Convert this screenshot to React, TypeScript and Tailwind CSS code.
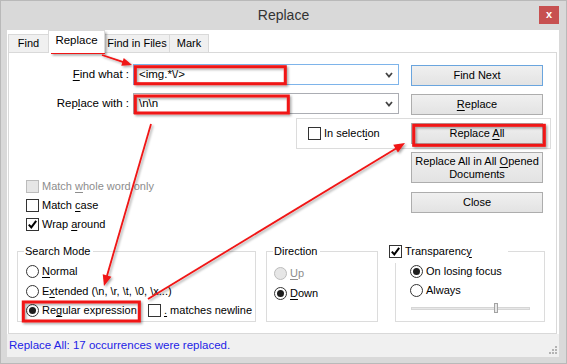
import React from "react";

function U({ children }: { children: React.ReactNode }) {
  return <span className="underline underline-offset-[2px] decoration-[1px]">{children}</span>;
}

function Check({ checked = false, disabled = false }: { checked?: boolean; disabled?: boolean }) {
  return (
    <span
      className={
        disabled
          ? "w-[13px] h-[13px] shrink-0 border border-[#bcbcbc] bg-[#e6e6e6]"
          : "w-[13px] h-[13px] shrink-0 border border-[#333333] bg-white flex items-center justify-center"
      }
    >
      {checked && (
        <svg width="11" height="11" viewBox="0 0 11 11">
          <path d="M1.8 5.6 L4.3 8.4 L9.2 1.8" stroke="#000" strokeWidth="2" fill="none" />
        </svg>
      )}
    </span>
  );
}

function Radio({ checked = false, disabled = false }: { checked?: boolean; disabled?: boolean }) {
  return (
    <span
      className={
        disabled
          ? "w-[13px] h-[13px] shrink-0 rounded-full border border-[#bcbcbc] bg-[#e6e6e6]"
          : "w-[13px] h-[13px] shrink-0 rounded-full border border-[#333333] bg-white flex items-center justify-center"
      }
    >
      {checked && <span className="w-[7px] h-[7px] rounded-full bg-[#1e1e1e]" />}
    </span>
  );
}

function Btn({
  children,
  def = false,
  tall = false,
}: {
  children: React.ReactNode;
  def?: boolean;
  tall?: boolean;
}) {
  return (
    <div
      className={
        (tall ? "h-[31px] leading-[13px] " : "h-[21px] ") +
        (def ? "border-[#6aa5de] " : "border-[#adadad] ") +
        "w-[132px] shrink-0 flex flex-col items-center justify-center text-center border bg-linear-to-b from-[#f0f0f0] to-[#e3e3e3]"
      }
    >
      {children}
    </div>
  );
}

function Combo({ value, focus = false }: { value: string; focus?: boolean }) {
  return (
    <div
      className={
        (focus ? "border-[#7eb4ea] " : "border-[#abadb3] ") +
        "w-[266px] h-[21px] border bg-white flex items-center pl-[5px]"
      }
    >
      <span className="whitespace-pre">{value}</span>
      <svg className="ml-auto mr-[5px]" width="8" height="6" viewBox="0 0 8 6">
        <path d="M1 1 L4 4.5 L7 1" stroke="#444" strokeWidth="1.8" fill="none" />
      </svg>
    </div>
  );
}

function arrowHead(x1: number, y1: number, x2: number, y2: number, len = 11, half = 4.5) {
  const dx = x2 - x1;
  const dy = y2 - y1;
  const n = Math.hypot(dx, dy);
  const ux = dx / n;
  const uy = dy / n;
  const bx = x2 - ux * len;
  const by = y2 - uy * len;
  const px = -uy;
  const py = ux;
  return {
    line: { x1, y1, x2: bx + ux * 1, y2: by + uy * 1 },
    pts: `${x2},${y2} ${bx + px * half},${by + py * half} ${bx - px * half},${by - py * half}`,
  };
}

const RED = "#f01414";

function Overlay() {
  const arrows = [
    arrowHead(101, 54, 131, 64, 10, 4),
    arrowHead(150, 123, 103, 285),
    arrowHead(147, 298, 404, 142),
  ];
  const rects = [
    { x: 51.5, y: 31.5, w: 51, h: 20 },
    { x: 134.3, y: 65.7, w: 150, h: 17 },
    { x: 134.3, y: 95, w: 153, h: 17 },
    { x: 412.7, y: 124.3, w: 130.6, h: 20 },
    { x: 22.3, y: 301, w: 116, h: 19 },
  ];
  return (
    <svg className="absolute left-0 top-0 pointer-events-none" width="567" height="364" viewBox="0 0 567 364">
      <defs>
        <filter id="sh" x="-20%" y="-20%" width="140%" height="140%">
          <feDropShadow dx="1.5" dy="1.5" stdDeviation="1.2" floodColor="#000" floodOpacity="0.35" />
        </filter>
      </defs>
      <g filter="url(#sh)">
        {rects.map((r, i) => (
          <rect key={i} x={r.x} y={r.y} width={r.w} height={r.h} fill="none" stroke={RED} strokeWidth="3" />
        ))}
        {arrows.map((a, i) => (
          <g key={i}>
            <line x1={a.line.x1} y1={a.line.y1} x2={a.line.x2} y2={a.line.y2} stroke={RED} strokeWidth="1.8" />
            <polygon points={a.pts} fill={RED} />
          </g>
        ))}
      </g>
    </svg>
  );
}

function GroupHeader({ label }: { label: string }) {
  return (
    <div className="flex h-[14px] items-center">
      <div className="self-end w-[7px] h-[7px] border-l border-t border-[#dcdcdc]" />
      <span className="pl-[1px] pr-[3px]">{label}</span>
      <div className="self-end flex-1 h-[7px] border-r border-t border-[#dcdcdc]" />
    </div>
  );
}

export default function App() {
  return (
    <div className="relative w-[567px] h-[364px] bg-[#d9d9d9] border border-[#b9b9b9] flex flex-col overflow-hidden font-['Liberation_Sans',Arial,sans-serif] text-[11px] text-black">
      {/* Title bar */}
      <div className="h-[29px] shrink-0 flex">
        <div className="w-[28px]" />
        <div className="flex-1 flex items-center justify-center text-[14px] text-[#333333] pb-[1px]">Replace</div>
        <div className="w-[28px] pt-[5px]">
          <div className="ml-[1px] w-[20px] h-[18px] bg-[#c75050] flex items-center justify-center text-white font-bold text-[11px] leading-none pb-[2px]">
            x
          </div>
        </div>
      </div>

      {/* Client */}
      <div className="ml-[6px] w-[552px] h-[327px] bg-white flex flex-col">
        {/* Tabs */}
        <div className="h-[22px] shrink-0 flex items-end pl-[1px]">
          <div className="w-[41px] h-[18px] border border-b-0 border-[#d9d9d9] bg-[#f0f0f0] flex items-center justify-center">
            Find
          </div>
          <div className="relative z-10 -ml-px -mb-px w-[57px] h-[23px] border border-b-0 border-[#d9d9d9] bg-white flex items-center justify-center pb-[2px] text-[11.5px]">
            Replace
          </div>
          <div className="-ml-px w-[66px] h-[18px] border border-b-0 border-[#d9d9d9] bg-[#f0f0f0] flex items-center justify-center">
            Find in Files
          </div>
          <div className="-ml-px w-[40px] h-[18px] border border-b-0 border-[#d9d9d9] bg-[#f0f0f0] flex items-center justify-center">
            Mark
          </div>
        </div>

        {/* Panel */}
        <div className="ml-[1px] w-[549px] h-[282px] shrink-0 border border-[#d9d9d9] bg-white flex flex-col">
          <div className="flex">
            {/* Left block */}
            <div className="w-[390px] flex flex-col">
              <div className="mt-[11px] h-[21px] flex items-center text-[11.5px]">
                <span className="w-[120px] text-right">
                  <U>F</U>ind what :
                </span>
                <div className="ml-[4px]">
                  <Combo value="<img.*\/>" focus />
                </div>
              </div>
              <div className="mt-[8px] h-[21px] flex items-center text-[11.5px]">
                <span className="w-[120px] text-right">
                  Rep<U>l</U>ace with :
                </span>
                <div className="ml-[4px]">
                  <Combo value="\n\n" />
                </div>
              </div>
              <div className="mt-[63px] pl-[17px] flex flex-col">
                <div className="h-[19px] flex items-center gap-[3px] text-[#8d8d8d]">
                  <Check disabled />
                  <span>
                    Match <U>w</U>hole word only
                  </span>
                </div>
                <div className="h-[19px] flex items-center gap-[3px]">
                  <Check />
                  <span>
                    Match <U>c</U>ase
                  </span>
                </div>
                <div className="h-[19px] flex items-center gap-[3px]">
                  <Check checked />
                  <span>
                    Wrap <U>a</U>round
                  </span>
                </div>
              </div>
            </div>

            {/* Right block */}
            <div className="ml-[12px] w-[132px] flex flex-col pt-[12px]">
              <Btn def>Find Next</Btn>
              <div className="mt-[8px]">
                <Btn>
                  <span>
                    <U>R</U>eplace
                  </span>
                </Btn>
              </div>
              <div className="mt-[3px] -ml-[115px] w-[255px] h-[31px] border border-[#dcdcdc] flex items-center">
                <div className="pl-[11px] flex items-center gap-[3px]">
                  <Check />
                  <span>
                    In select<U>i</U>on
                  </span>
                </div>
                <div className="ml-auto mr-[7px]">
                  <Btn>
                    <span>
                      Replace <U>A</U>ll
                    </span>
                  </Btn>
                </div>
              </div>
              <div className="mt-[3px]">
                <Btn tall>
                  <span className="whitespace-nowrap">
                    Replace All in All <U>O</U>pened
                  </span>
                  <span>Documents</span>
                </Btn>
              </div>
              <div className="mt-[9px]">
                <Btn>Close</Btn>
              </div>
            </div>
          </div>

          {/* Group boxes */}
          <div className="mt-[10px] ml-[8px] flex items-start">
            <div className="w-[239px] flex flex-col">
              <GroupHeader label="Search Mode" />
              <div className="h-[64px] border-x border-b border-[#dcdcdc] pl-[8px] pt-[3px] flex flex-col">
                <div className="h-[20px] flex items-center gap-[3px]">
                  <Radio />
                  <span>
                    <U>N</U>ormal
                  </span>
                </div>
                <div className="h-[20px] flex items-center gap-[3px]">
                  <Radio />
                  <span className="whitespace-pre">
                    E<U>x</U>tended (\n, \r, \t, \0, \x...)
                  </span>
                </div>
                <div className="h-[19px] flex items-center">
                  <Radio checked />
                  <span className="ml-[3px] w-[106px] whitespace-nowrap">
                    Re<U>g</U>ular expression
                  </span>
                  <Check />
                  <span className="ml-[3px] whitespace-nowrap">
                    <U>.</U> matches newline
                  </span>
                </div>
              </div>
            </div>

            <div className="ml-[10px] w-[112px] flex flex-col">
              <GroupHeader label="Direction" />
              <div className="h-[64px] border-x border-b border-[#dcdcdc] pl-[7px] pt-[5px] flex flex-col">
                <div className="h-[20px] flex items-center gap-[3px] text-[#8d8d8d]">
                  <Radio disabled />
                  <span>
                    <U>U</U>p
                  </span>
                </div>
                <div className="h-[20px] flex items-center gap-[3px]">
                  <Radio checked />
                  <span>
                    <U>D</U>own
                  </span>
                </div>
              </div>
            </div>

            <div className="ml-[17px] w-[150px] flex flex-col">
              <div className="flex h-[14px] items-center">
                <div className="-ml-[6px] flex items-center">
                  <Check checked />
                  <span className="pl-[3px]">
                    Transparenc<U>y</U>
                  </span>
                </div>
                <div className="ml-auto self-end w-[37px] h-[7px] border-r border-t border-[#dcdcdc]" />
              </div>
              <div className="h-[5px] border-r border-[#dcdcdc]" />
              <div className="h-[59px] border-x border-b border-[#dcdcdc] pl-[14px] flex flex-col">
                <div className="h-[16px] flex items-center gap-[3px]">
                  <Radio checked />
                  <span>On losing focus</span>
                </div>
                <div className="h-[22px] flex items-center gap-[3px]">
                  <Radio />
                  <span>Always</span>
                </div>
                <div className="mt-[6px] ml-[1px] w-[119px] h-[3px] bg-[#e7e7e7] border border-[#d6d6d6] relative">
                  <div className="absolute left-[82px] -top-[5px] w-[4px] h-[10px] bg-[#e8e8e8] border border-[#a3a3a3]" />
                </div>
              </div>
            </div>
          </div>
        </div>

        {/* Status bar */}
        <div className="flex-1 bg-[#f0f0f0] flex items-start justify-between">
          <span className="pl-[2px] pt-[3px] text-[11.5px] text-[#2323e6]">Replace All: 17 occurrences were replaced.</span>
          <svg className="self-end mb-[2px] mr-[1px]" width="9" height="9" viewBox="0 0 9 9">
            <rect x="6" y="0" width="2" height="2" fill="#b3b3b3" />
            <rect x="3" y="3" width="2" height="2" fill="#b3b3b3" />
            <rect x="6" y="3" width="2" height="2" fill="#b3b3b3" />
            <rect x="0" y="6" width="2" height="2" fill="#b3b3b3" />
            <rect x="3" y="6" width="2" height="2" fill="#b3b3b3" />
            <rect x="6" y="6" width="2" height="2" fill="#b3b3b3" />
          </svg>
        </div>
      </div>

      <Overlay />
    </div>
  );
}
